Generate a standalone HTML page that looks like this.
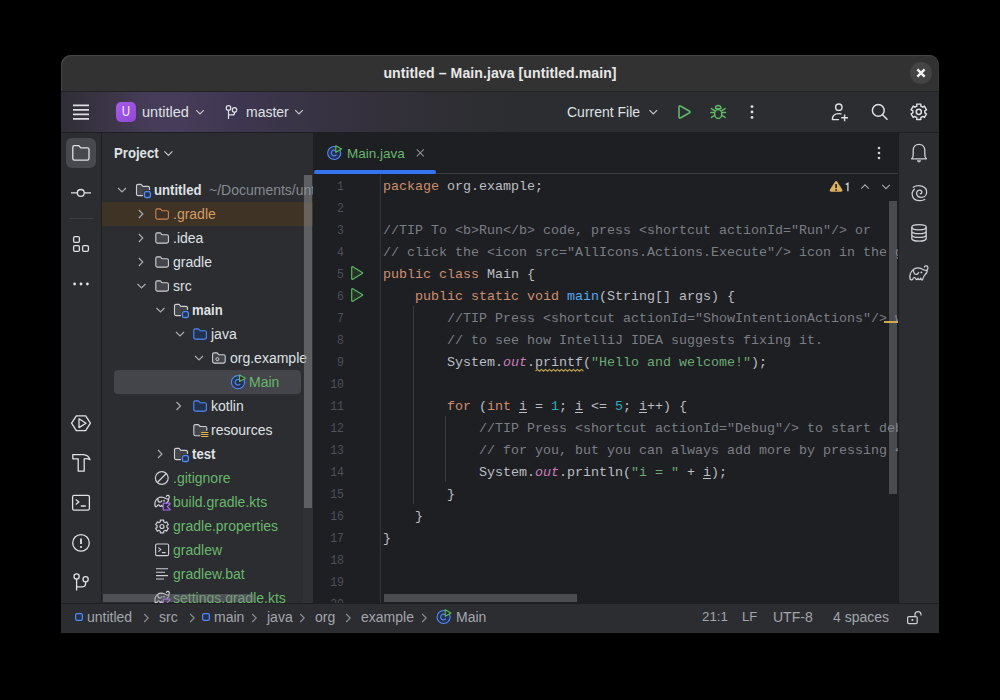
<!DOCTYPE html>
<html><head><meta charset="utf-8"><style>
*{box-sizing:border-box;margin:0;padding:0}
html,body{width:1000px;height:700px;background:#000;overflow:hidden;font-family:"Liberation Sans",sans-serif}
.a{position:absolute}
svg.i{position:absolute;left:0;top:0;overflow:visible}
.ui{color:#dfe1e5;font-size:14px;position:absolute;white-space:pre;line-height:16px}
.tr{position:absolute;font-size:14px;color:#dfe1e5;white-space:pre;line-height:16px}
.b{font-weight:bold;font-size:14.3px;transform:scaleX(0.92);transform-origin:0 0}
.g{color:#69b66d}
.code{font-family:"Liberation Mono",monospace;font-size:13.333px;white-space:pre;position:absolute;line-height:22px;color:#bcbec4}
.k{color:#cf8e6d}
.s{color:#6aab73}
.n{color:#2aacb8}
.c{color:#7a7e85}
.f{color:#56a8f5}
.st{color:#c77dbb;font-style:italic}
.u{text-decoration:underline;text-underline-offset:2px;text-decoration-thickness:1px}
.wv{text-decoration:underline wavy #b59a4e;text-decoration-thickness:1px;text-underline-offset:3px}
.ln{position:absolute;width:31px;text-align:right;transform:scaleX(0.86);transform-origin:100% 0;font-family:"Liberation Mono",monospace;font-size:13.333px;color:#4b5059;line-height:22px;white-space:pre}
.sb{position:absolute;font-size:14px;color:#a3a6ad;white-space:pre;line-height:16px;top:609px}
</style></head><body>
<div class="a" style="left:61px;top:55px;width:878px;height:578px;border-radius:10px 10px 0 0;overflow:hidden;background:#2b2d30"></div>
<div class="a" style="left:61px;top:55px;width:878px;height:37px;background:#323232;border-radius:10px 10px 0 0;box-shadow:inset 1px 1px 0 #454545,inset -1px 0 0 #3a3a3a;border-bottom:1px solid #232323"></div>
<div class="a" style="left:61px;top:65px;width:878px;text-align:center;color:#e8e8e8;font-weight:bold;font-size:14.1px;letter-spacing:0.06px;line-height:16px;white-space:pre">untitled – Main.java [untitled.main]</div>
<svg class="i" style="left:900px;top:55px" width="40" height="37" viewBox="900 55 40 37"><circle cx="921" cy="73" r="11" fill="#444444"/><path d="M917.4 69.4L924.6 76.6M924.6 69.4L917.4 76.6" stroke="#f4f4f4" stroke-width="2.4"/></svg>
<div class="a" style="left:61px;top:92px;width:878px;height:41px;background:linear-gradient(90deg,#2f2e36 0px,#383342 35px,#463c58 85px,#473c59 115px,#3e3650 180px,#383344 250px,#33303b 320px,#2e2e33 400px,#2b2d30 460px);border-bottom:1px solid #1e1f22"></div>
<svg class="i" style="left:65px;top:95px" width="30" height="30" viewBox="65 95 30 30"><path d="M73 105.3H89M73 109.8H89M73 114.3H89M73 118.8H89" stroke="#dcdde2" stroke-width="1.7"/></svg>
<div class="a" style="left:116px;top:102px;width:20px;height:20px;border-radius:5px;background:linear-gradient(135deg,#a65ce8,#9147d8)"></div>
<div class="ui" style="left:116px;top:103px;width:20px;text-align:center;color:#f3ecfb;font-size:14.5px;transform:scaleX(0.8)">U</div>
<div class="ui" style="left:142px;top:104px;font-size:14.5px">untitled</div>
<svg class="i" style="left:190px;top:100px" width="20" height="20" viewBox="190 100 20 20"><path d="M196.2 110.2L200 114L203.8 110.2" stroke="#c4c6cc" stroke-width="1.2" fill="none"/></svg>
<svg class="i" style="left:220px;top:100px" width="25" height="25" viewBox="220 100 25 25"><circle cx="228.5" cy="107.9" r="2.3" stroke="#dfe1e5" fill="none" stroke-width="1.2"/><circle cx="234.5" cy="109.9" r="2.2" stroke="#dfe1e5" fill="none" stroke-width="1.2"/><path d="M228.5 110.2V119M234.5 112.1V112.9Q234.5 114.9 232.5 114.9H228.5" stroke="#dfe1e5" fill="none" stroke-width="1.2"/></svg>
<div class="ui" style="left:246px;top:104px;">master</div>
<svg class="i" style="left:290px;top:100px" width="20" height="20" viewBox="290 100 20 20"><path d="M295.2 110.2L299 114L302.8 110.2" stroke="#c4c6cc" stroke-width="1.2" fill="none"/></svg>
<div class="ui" style="left:567px;top:104px;">Current File</div>
<svg class="i" style="left:645px;top:100px" width="20" height="20" viewBox="645 100 20 20"><path d="M649.5 110.2L653.3 114L657.1 110.2" stroke="#c4c6cc" stroke-width="1.2" fill="none"/></svg>
<svg class="i" style="left:670px;top:100px" width="30" height="24" viewBox="670 100 30 24"><path d="M679 107.2Q679 105.2 680.8 106.2L689.2 111Q690.8 112 689.2 113L680.8 117.8Q679 118.8 679 116.8Z" stroke="#5fb865" stroke-width="1.6" fill="none" stroke-linejoin="round"/></svg>
<svg class="i" style="left:700px;top:100px" width="30" height="24" viewBox="700 100 30 24"><path d="M715.4 108.6C715.4 106.6 716.6 105.5 718.2 105.5S721 106.6 721 108.6Z" stroke="#5fb865" stroke-width="1.4" fill="none" stroke-linejoin="round"/><ellipse cx="718.2" cy="114" rx="3.6" ry="4.4" stroke="#5fb865" stroke-width="1.5" fill="none"/><path d="M711.3 108.6L714.6 110.6M725.1 108.6L721.8 110.6M710.8 112.5H714.5M725.6 112.5H721.9M711.3 117.4L714.6 115.4M725.1 117.4L721.8 115.4" stroke="#5fb865" stroke-width="1.4" stroke-linecap="round"/></svg>
<svg class="i" style="left:745px;top:100px" width="14" height="24" viewBox="745 100 14 24"><circle cx="752" cy="106.6" r="1.4" fill="#dfe1e5"/><circle cx="752" cy="112" r="1.4" fill="#dfe1e5"/><circle cx="752" cy="117.4" r="1.4" fill="#dfe1e5"/></svg>
<svg class="i" style="left:825px;top:98px" width="30" height="28" viewBox="825 98 30 28"><circle cx="838.8" cy="107.2" r="3.2" stroke="#dfe1e5" fill="none" stroke-width="1.4"/><path d="M832.4 119.6C832.4 116 834.8 113.6 838.8 113.6C839.6 113.6 840.3 113.7 841 113.9M832.4 119.6H838.5" stroke="#dfe1e5" fill="none" stroke-width="1.4" stroke-linecap="round"/><path d="M844.6 114.4V121.2M841.2 117.8H848" stroke="#dfe1e5" fill="none" stroke-width="1.4"/></svg>
<svg class="i" style="left:865px;top:98px" width="30" height="28" viewBox="865 98 30 28"><circle cx="878.3" cy="110.4" r="5.9" stroke="#dfe1e5" fill="none" stroke-width="1.5"/><path d="M882.6 114.8L887 119.3" stroke="#dfe1e5" fill="none" stroke-width="1.5" stroke-linecap="round"/></svg>
<svg class="i" style="left:905px;top:98px" width="30" height="28" viewBox="905 98 30 28"><path d="M916.67 104.09L920.93 104.09L920.78 106.03L922.81 107.20L924.41 106.10L926.54 109.79L924.79 110.63L924.79 112.97L926.54 113.81L924.41 117.50L922.81 116.40L920.78 117.57L920.93 119.51L916.67 119.51L916.82 117.57L914.79 116.40L913.19 117.50L911.06 113.81L912.81 112.97L912.81 110.63L911.06 109.79L913.19 106.10L914.79 107.20L916.82 106.03Z" stroke="#dfe1e5" fill="none" stroke-width="1.4" stroke-linejoin="round"/><circle cx="918.8" cy="111.8" r="2.6" stroke="#dfe1e5" fill="none" stroke-width="1.5"/></svg>
<div class="a" style="left:61px;top:133px;width:41px;height:470px;background:#2b2d30;border-right:1px solid #1e1f22"></div>
<div class="a" style="left:102px;top:133px;width:211px;height:470px;background:#2b2d30;"></div>
<div class="a" style="left:313px;top:133px;width:585px;height:470px;background:#1e1f22;"></div>
<div class="a" style="left:898px;top:133px;width:41px;height:470px;background:#2b2d30;border-left:1px solid #1e1f22"></div>
<div class="a" style="left:66px;top:138px;width:30px;height:30px;background:#47494e;border-radius:6px"></div>
<svg class="i" style="left:66px;top:138px" width="30" height="30" viewBox="66 138 30 30"><path d="M72.8 147.3Q72.8 145.7 74.4 145.7H78.8L80.8 147.9H87.4Q89 147.9 89 149.5V158.6Q89 160.2 87.4 160.2H74.4Q72.8 160.2 72.8 158.6Z" stroke="#dfe1e5" fill="none" stroke-width="1.3" stroke-linejoin="round"/></svg>
<svg class="i" style="left:66px;top:185px" width="30" height="16" viewBox="66 185 30 16"><circle cx="80.8" cy="192.9" r="3.4" stroke="#dfe1e5" fill="none" stroke-width="1.3"/><path d="M71 192.9H77.4M84.2 192.9H91" stroke="#dfe1e5" fill="none" stroke-width="1.3"/></svg>
<div class="a" style="left:69px;top:218px;width:24px;height:1px;background:#3c3f44;"></div>
<svg class="i" style="left:66px;top:230px" width="30" height="30" viewBox="66 230 30 30"><rect x="73.6" y="236.6" width="5.8" height="5.8" rx="1.4" stroke="#dfe1e5" fill="none" stroke-width="1.3" stroke-width="1.2"/><rect x="73.6" y="245.6" width="5.8" height="5.8" rx="1.4" stroke="#dfe1e5" fill="none" stroke-width="1.3" stroke-width="1.2"/><rect x="82.6" y="245.6" width="5.8" height="5.8" rx="1.4" stroke="#dfe1e5" fill="none" stroke-width="1.3" stroke-width="1.2"/></svg>
<svg class="i" style="left:66px;top:278px" width="30" height="12" viewBox="66 278 30 12"><circle cx="74.6" cy="284" r="1.4" fill="#dfe1e5"/><circle cx="81" cy="284" r="1.4" fill="#dfe1e5"/><circle cx="87.4" cy="284" r="1.4" fill="#dfe1e5"/></svg>
<svg class="i" style="left:66px;top:410px" width="30" height="26" viewBox="66 410 30 26"><path d="M76.3 415.8H85.7L90.4 423.2L85.7 430.6H76.3L71.6 423.2Z" stroke="#dfe1e5" fill="none" stroke-width="1.3" stroke-linejoin="round"/><path d="M79 418.8V427.6L86 423.2Z" stroke="#dfe1e5" fill="none" stroke-width="1.3" stroke-linejoin="round"/></svg>
<svg class="i" style="left:66px;top:450px" width="30" height="26" viewBox="66 450 30 26"><path d="M72.8 454.6H83.4Q88.4 455 90 459.6Q87.2 458.2 84.2 458.8V471.2H78.2V458.8H72.8Z" stroke="#dfe1e5" fill="none" stroke-width="1.3" stroke-linejoin="round"/></svg>
<svg class="i" style="left:66px;top:490px" width="30" height="26" viewBox="66 490 30 26"><rect x="72.6" y="495.4" width="16.8" height="14.8" rx="1.6" stroke="#dfe1e5" fill="none" stroke-width="1.3"/><path d="M75.8 499.6L78.8 502.1L75.8 504.6M80.8 506H85.8" stroke="#dfe1e5" fill="none" stroke-width="1.3"/></svg>
<svg class="i" style="left:66px;top:530px" width="30" height="26" viewBox="66 530 30 26"><circle cx="81" cy="542.9" r="8.3" stroke="#dfe1e5" fill="none" stroke-width="1.3" stroke-width="1.4"/><path d="M81 538.4V544" stroke="#dfe1e5" stroke-width="1.8"/><circle cx="81" cy="547" r="1.1" fill="#dfe1e5"/></svg>
<svg class="i" style="left:66px;top:570px" width="30" height="26" viewBox="66 570 30 26"><circle cx="76.6" cy="576.4" r="2.6" stroke="#dfe1e5" fill="none" stroke-width="1.3"/><circle cx="85.6" cy="579.2" r="2.6" stroke="#dfe1e5" fill="none" stroke-width="1.3"/><path d="M76.6 579V590.6M85.6 581.8V583.6Q85.6 586.8 82.4 586.8H76.6" stroke="#dfe1e5" fill="none" stroke-width="1.3"/></svg>
<div class="tr b" style="left:114px;top:145px;">Project</div>
<svg class="i" style="left:160px;top:145px" width="20" height="16" viewBox="160 145 20 16"><path d="M164.4 151.4L168.4 155.4L172.4 151.4" stroke="#c4c6cc" stroke-width="1.2" fill="none"/></svg>
<div class="a" style="left:102px;top:202px;width:211px;height:24px;background:#3f3325;"></div>
<div class="a" style="left:114px;top:370px;width:187px;height:24px;background:#43454a;border-radius:4px"></div>
<div class="a" style="left:102px;top:133px;width:211px;height:470px;overflow:hidden"><div class="a" style="left:-102px;top:-133px;width:1000px;height:700px">
<div class="tr b" style="left:154px;top:182px;">untitled</div>
<div class="tr" style="left:209px;top:182px;color:#868a91">~/Documents/untitled</div>
<div class="tr" style="left:173px;top:206px;color:#d59c62">.gradle</div>
<div class="tr" style="left:173px;top:230px;">.idea</div>
<div class="tr" style="left:173px;top:254px;">gradle</div>
<div class="tr" style="left:173px;top:278px;">src</div>
<div class="tr b" style="left:192px;top:302px;">main</div>
<div class="tr" style="left:211px;top:326px;">java</div>
<div class="tr" style="left:230px;top:350px;">org.example</div>
<div class="tr g" style="left:249px;top:374px;">Main</div>
<div class="tr" style="left:211px;top:398px;">kotlin</div>
<div class="tr" style="left:211px;top:422px;">resources</div>
<div class="tr b" style="left:192px;top:446px;">test</div>
<div class="tr g" style="left:173px;top:470px;">.gitignore</div>
<div class="tr g" style="left:173px;top:494px;">build.gradle.kts</div>
<div class="tr g" style="left:173px;top:518px;">gradle.properties</div>
<div class="tr g" style="left:173px;top:542px;">gradlew</div>
<div class="tr g" style="left:173px;top:566px;">gradlew.bat</div>
<div class="tr g" style="left:173px;top:590px;">settings.gradle.kts</div>
<svg class="i" style="left:102px;top:133px" width="211" height="470" viewBox="102 133 211 470"><path d="M118 188L122 192L126 188" stroke="#a8aab0" stroke-width="1.2" fill="none"/><path d="M136.5 185.9Q136.5 184.4 138.0 184.4H141.1L142.9 186.3H148.0Q149.5 186.3 149.5 187.8V190.4H143.5V195.6H138.0Q136.5 195.6 136.5 194.1Z" fill="#43454a"/><path d="M142.9 195.6H138.0Q136.5 195.6 136.5 194.1V185.9Q136.5 184.4 138.0 184.4H141.1L142.9 186.3H148.0Q149.5 186.3 149.5 187.8V190.0" stroke="#ced0d6" stroke-width="1.15" fill="none" stroke-linejoin="round"/><rect x="144.5" y="191.6" width="5.9" height="5.9" rx="1.6" stroke="#548af7" stroke-width="1.3" fill="#233250"/><path d="M138.8 210L142.8 214L138.8 218" stroke="#a8aab0" stroke-width="1.2" fill="none"/><path d="M155.8 210.4Q155.8 208.9 157.3 208.9H160.4L162.20000000000002 210.8H166.9Q168.4 210.8 168.4 212.3V217.6Q168.4 219.1 166.9 219.1H157.3Q155.8 219.1 155.8 217.6Z" stroke="#c98451" stroke-width="1.1" fill="#3f3026" stroke-linejoin="round"/><path d="M138.8 234L142.8 238L138.8 242" stroke="#a8aab0" stroke-width="1.2" fill="none"/><path d="M155.8 234.4Q155.8 232.9 157.3 232.9H160.4L162.20000000000002 234.8H166.9Q168.4 234.8 168.4 236.3V241.6Q168.4 243.1 166.9 243.1H157.3Q155.8 243.1 155.8 241.6Z" stroke="#ced0d6" stroke-width="1.1" fill="#43454a" stroke-linejoin="round"/><path d="M138.8 258L142.8 262L138.8 266" stroke="#a8aab0" stroke-width="1.2" fill="none"/><path d="M155.8 258.4Q155.8 256.9 157.3 256.9H160.4L162.20000000000002 258.79999999999995H166.9Q168.4 258.79999999999995 168.4 260.29999999999995V265.59999999999997Q168.4 267.09999999999997 166.9 267.09999999999997H157.3Q155.8 267.09999999999997 155.8 265.59999999999997Z" stroke="#ced0d6" stroke-width="1.1" fill="#43454a" stroke-linejoin="round"/><path d="M137.5 284L141.5 288L145.5 284" stroke="#a8aab0" stroke-width="1.2" fill="none"/><path d="M155.8 282.4Q155.8 280.9 157.3 280.9H160.4L162.20000000000002 282.79999999999995H166.9Q168.4 282.79999999999995 168.4 284.29999999999995V289.59999999999997Q168.4 291.09999999999997 166.9 291.09999999999997H157.3Q155.8 291.09999999999997 155.8 289.59999999999997Z" stroke="#ced0d6" stroke-width="1.1" fill="#43454a" stroke-linejoin="round"/><path d="M156.5 308L160.5 312L164.5 308" stroke="#a8aab0" stroke-width="1.2" fill="none"/><path d="M174.5 305.9Q174.5 304.4 176.0 304.4H179.1L180.9 306.29999999999995H186.0Q187.5 306.29999999999995 187.5 307.79999999999995V310.4H181.5V315.59999999999997H176.0Q174.5 315.59999999999997 174.5 314.09999999999997Z" fill="#43454a"/><path d="M180.9 315.59999999999997H176.0Q174.5 315.59999999999997 174.5 314.09999999999997V305.9Q174.5 304.4 176.0 304.4H179.1L180.9 306.29999999999995H186.0Q187.5 306.29999999999995 187.5 307.79999999999995V310.0" stroke="#ced0d6" stroke-width="1.15" fill="none" stroke-linejoin="round"/><rect x="182.5" y="311.59999999999997" width="5.9" height="5.9" rx="1.6" stroke="#548af7" stroke-width="1.3" fill="#233250"/><path d="M176 332L180 336L184 332" stroke="#a8aab0" stroke-width="1.2" fill="none"/><path d="M193.8 330.4Q193.8 328.9 195.3 328.9H198.4L200.20000000000002 330.79999999999995H204.9Q206.4 330.79999999999995 206.4 332.29999999999995V337.59999999999997Q206.4 339.09999999999997 204.9 339.09999999999997H195.3Q193.8 339.09999999999997 193.8 337.59999999999997Z" stroke="#548af7" stroke-width="1.1" fill="#233250" stroke-linejoin="round"/><path d="M195 356L199 360L203 356" stroke="#a8aab0" stroke-width="1.2" fill="none"/><path d="M212.6 354.4Q212.6 352.9 214.1 352.9H217.2L219.0 354.79999999999995H223.7Q225.2 354.79999999999995 225.2 356.29999999999995V361.59999999999997Q225.2 363.09999999999997 223.7 363.09999999999997H214.1Q212.6 363.09999999999997 212.6 361.59999999999997Z" stroke="#ced0d6" stroke-width="1.1" fill="#43454a" stroke-linejoin="round"/><circle cx="217.4" cy="359.2" r="1.5" stroke="#ced0d6" stroke-width="1" fill="none"/><circle cx="238" cy="382.2" r="6.55" stroke="#548af7" stroke-width="1.1" fill="#233250"/><path d="M240.2 380.59999999999997A2.8 2.8 0 1 0 240.2 383.8" stroke="#548af7" stroke-width="1.15" fill="none"/><path d="M239.6 375.0V381.4L245.4 378.2Z" fill="#22301f" stroke="#5fb865" stroke-width="1.1" stroke-linejoin="round"/><path d="M176.5 402L180.5 406L176.5 410" stroke="#a8aab0" stroke-width="1.2" fill="none"/><path d="M193.8 402.4Q193.8 400.9 195.3 400.9H198.4L200.20000000000002 402.79999999999995H204.9Q206.4 402.79999999999995 206.4 404.29999999999995V409.59999999999997Q206.4 411.09999999999997 204.9 411.09999999999997H195.3Q193.8 411.09999999999997 193.8 409.59999999999997Z" stroke="#548af7" stroke-width="1.1" fill="#233250" stroke-linejoin="round"/><path d="M200.3 435.8H195.3Q193.8 435.8 193.8 434.3V426.1Q193.8 424.6 195.3 424.6H198.4L200.20000000000002 426.5H205.3Q206.8 426.5 206.8 428.0V430.8" stroke="#ced0d6" stroke-width="1.1" fill="#43454a" stroke-linejoin="round"/><path d="M201.2 432.5H208.4M201.2 434.5H208.4M201.2 436.5H208.4" stroke="#e3b44c" stroke-width="1.15"/><path d="M158 450L162 454L158 458" stroke="#a8aab0" stroke-width="1.2" fill="none"/><path d="M174.5 449.9Q174.5 448.4 176.0 448.4H179.1L180.9 450.29999999999995H186.0Q187.5 450.29999999999995 187.5 451.79999999999995V454.4H181.5V459.59999999999997H176.0Q174.5 459.59999999999997 174.5 458.09999999999997Z" fill="#43454a"/><path d="M180.9 459.59999999999997H176.0Q174.5 459.59999999999997 174.5 458.09999999999997V449.9Q174.5 448.4 176.0 448.4H179.1L180.9 450.29999999999995H186.0Q187.5 450.29999999999995 187.5 451.79999999999995V454.0" stroke="#ced0d6" stroke-width="1.15" fill="none" stroke-linejoin="round"/><rect x="182.5" y="455.59999999999997" width="5.9" height="5.9" rx="1.6" stroke="#548af7" stroke-width="1.3" fill="#233250"/><circle cx="161.8" cy="478" r="6.4" stroke="#ced0d6" stroke-width="1.2" fill="none"/><path d="M157.3 482.5L166.3 473.5" stroke="#ced0d6" stroke-width="1.2"/><g transform="translate(-573.02,282.72) scale(0.8)"><path d="M910.2 279.4C909.4 276 910.4 272 913.2 269.6C916 267.6 920.4 267.8 923.6 269.8C924.8 270.4 926 270.6 927 270C928.4 268.8 928.2 266.4 926.6 265.9C925.4 265.6 924.6 266.2 924.4 267M927 270C927.6 271.8 926.4 273.6 924.8 275C923.6 276 923.2 277.6 922.6 279.6Q921.7 280.8 920.7 278.2Q919.5 281.2 918.1 278.2Q916.9 281.2 915.5 278.2Q914.4 277 913.3 278.2Q912 281 910.2 279.4M913.4 270.2C913.6 272.6 914.6 274.4 916.4 274.4C917.4 274.4 918.2 273.6 918.6 272.6" stroke="#ced0d6" stroke-width="1.56" fill="none" stroke-linejoin="round" stroke-linecap="round"/><circle cx="921.4" cy="272.4" r="1.12" fill="#ced0d6"/></g><path d="M163.2 503.2H170V504L167.2 506.6L170 509.2V510H163.2Z" stroke="#a571e6" stroke-width="1.2" fill="#2e2640" stroke-linejoin="round"/><path d="M160.24 520.14L163.76 520.14L163.62 521.77L165.29 522.73L166.63 521.79L168.39 524.84L166.91 525.54L166.91 527.46L168.39 528.16L166.63 531.21L165.29 530.27L163.62 531.23L163.76 532.86L160.24 532.86L160.38 531.23L158.71 530.27L157.37 531.21L155.61 528.16L157.09 527.46L157.09 525.54L155.61 524.84L157.37 521.79L158.71 522.73L160.38 521.77Z" stroke="#ced0d6" stroke-width="1.15" fill="none" stroke-linejoin="round"/><circle cx="162" cy="526.5" r="2" stroke="#ced0d6" stroke-width="1.2" fill="none"/><rect x="155.6" y="544" width="13" height="11.6" rx="1.3" stroke="#ced0d6" stroke-width="1.1" fill="none"/><path d="M158.4 547.6L160.8 549.6L158.4 551.6M162 552.6H165.6" stroke="#ced0d6" stroke-width="1.1" fill="none"/><path d="M156 568.8H168M156 572.2H165M156 575.6H168M156 579H164" stroke="#ced0d6" stroke-width="1.1"/><g transform="translate(-573.02,378.72) scale(0.8)"><path d="M910.2 279.4C909.4 276 910.4 272 913.2 269.6C916 267.6 920.4 267.8 923.6 269.8C924.8 270.4 926 270.6 927 270C928.4 268.8 928.2 266.4 926.6 265.9C925.4 265.6 924.6 266.2 924.4 267M927 270C927.6 271.8 926.4 273.6 924.8 275C923.6 276 923.2 277.6 922.6 279.6Q921.7 280.8 920.7 278.2Q919.5 281.2 918.1 278.2Q916.9 281.2 915.5 278.2Q914.4 277 913.3 278.2Q912 281 910.2 279.4M913.4 270.2C913.6 272.6 914.6 274.4 916.4 274.4C917.4 274.4 918.2 273.6 918.6 272.6" stroke="#ced0d6" stroke-width="1.56" fill="none" stroke-linejoin="round" stroke-linecap="round"/><circle cx="921.4" cy="272.4" r="1.12" fill="#ced0d6"/></g><path d="M163.2 599.2H170V600L167.2 602.6L170 605.2V606H163.2Z" stroke="#a571e6" stroke-width="1.2" fill="#2e2640" stroke-linejoin="round"/></svg>
<div class="a" style="left:103px;top:594px;width:151px;height:8px;background:rgba(125,127,132,0.45);"></div>
<div class="a" style="left:303px;top:175px;width:10px;height:428px;background:rgba(255,255,255,0.02);"></div>
<div class="a" style="left:304px;top:175px;width:8px;height:333px;background:rgba(140,141,145,0.5);"></div>
</div></div>
<div class="a" style="left:313px;top:133px;width:585px;height:470px;overflow:hidden"><div class="a" style="left:-313px;top:-133px;width:1000px;height:700px">
<div class="tr g" style="left:347px;top:146px;font-size:13.5px">Main.java</div>
<div class="a" style="left:313px;top:173px;width:585px;height:1px;background:#393b40;"></div>
<div class="a" style="left:314px;top:170px;width:122px;height:4px;background:#3574f0;border-radius:2px"></div>
<div class="a" style="left:380px;top:174px;width:1px;height:429px;background:#313438;"></div>
<div class="ln" style="left:313px;top:176px">1
2
3
4
5
6
7
8
9
10
11
12
13
14
15
16
17
18
19
20</div>
<div class="a" style="left:413px;top:306px;width:1px;height:198px;background:#393b40;"></div>
<div class="a" style="left:445px;top:416px;width:1px;height:66px;background:#393b40;"></div>
<div class="code" style="left:383px;top:176px"><span class="k">package</span> org.example;

<span class="c">//TIP To &lt;b&gt;Run&lt;/b&gt; code, press &lt;shortcut actionId="Run"/&gt; or</span>
<span class="c">// click the &lt;icon src="AllIcons.Actions.Execute"/&gt; icon in the gutter.</span>
<span class="k">public class</span> Main {
    <span class="k">public static void</span> <span class="f">main</span>(String[] args) {
        <span class="c">//TIP Press &lt;shortcut actionId="ShowIntentionActions"/&gt; with your caret at the highlighted text</span>
        <span class="c">// to see how IntelliJ IDEA suggests fixing it.</span>
        System.<span class="st">out</span>.printf(<span class="s">"Hello and welcome!"</span>);

        <span class="k">for</span> (<span class="k">int</span> <span class="u">i</span> = <span class="n">1</span>; <span class="u">i</span> &lt;= <span class="n">5</span>; <span class="u">i</span>++) {
            <span class="c">//TIP Press &lt;shortcut actionId="Debug"/&gt; to start debugging your code.</span>
            <span class="c">// for you, but you can always add more by pressing &lt;shortcut actionId="ToggleLineBreakpoint"/&gt;.</span>
            System.<span class="st">out</span>.println(<span class="s">"i = "</span> + <span class="u">i</span>);
        }
    }
}


</div>
<svg class="i" style="left:313px;top:133px" width="585" height="470" viewBox="313 133 585 470"><circle cx="334.2" cy="153" r="6.55" stroke="#548af7" stroke-width="1.1" fill="#233250"/><path d="M336.4 151.4A2.8 2.8 0 1 0 336.4 154.6" stroke="#548af7" stroke-width="1.15" fill="none"/><path d="M335.8 145.8V152.2L341.59999999999997 149Z" fill="#22301f" stroke="#5fb865" stroke-width="1.1" stroke-linejoin="round"/><path d="M416.8 149.4L423.8 156.4M423.8 149.4L416.8 156.4" stroke="#8c8f95" stroke-width="1.1"/><circle cx="879" cy="148" r="1.3" fill="#ced0d6"/><circle cx="879" cy="153" r="1.3" fill="#ced0d6"/><circle cx="879" cy="158" r="1.3" fill="#ced0d6"/><path d="M351.7 267.4Q351.7 266.2 352.8 266.8L362.2 272.4Q363.2 273 362.2 273.6L352.8 279.2Q351.7 279.8 351.7 278.6Z" stroke="#5fb865" stroke-width="1.15" fill="#233426" stroke-linejoin="round"/><path d="M351.7 289.4Q351.7 288.2 352.8 288.8L362.2 294.4Q363.2 295 362.2 295.6L352.8 301.2Q351.7 301.8 351.7 300.6Z" stroke="#5fb865" stroke-width="1.15" fill="#233426" stroke-linejoin="round"/><path d="M834.6 182.2Q836.1 180 837.6 182.2L842.2 189.6Q843.2 191.8 840.8 191.8H831.4Q829 191.8 830 189.6Z" fill="#d9b15f"/><path d="M836.1 184V188" stroke="#1e1f22" stroke-width="1.6"/><circle cx="836.1" cy="190" r="0.9" fill="#1e1f22"/><path d="M845.8 184.6L847.9 183.2V191.2" stroke="#c6c9d0" stroke-width="1.4" fill="none"/><path d="M861.2 188.6L865 184.8L868.8 188.6M882.2 184.8L886 188.6L889.8 184.8" stroke="#a2a5ab" stroke-width="1.2" fill="none"/><path d="M535.5 371.2L537.5 369.4L539.5 371.2L541.5 369.4L543.5 371.2L545.5 369.4L547.5 371.2L549.5 369.4L551.5 371.2L553.5 369.4L555.5 371.2L557.5 369.4L559.5 371.2L561.5 369.4L563.5 371.2L565.5 369.4L567.5 371.2L569.5 369.4L571.5 371.2L573.5 369.4L575.5 371.2L577.5 369.4L579.5 371.2L581.5 369.4L583.5 371.2" stroke="#c5a451" stroke-width="1.1" fill="none"/></svg>
<div class="a" style="left:889px;top:201px;width:8px;height:293px;background:rgba(150,152,156,0.37);"></div>
<div class="a" style="left:884px;top:321px;width:14px;height:2px;background:#d2a94f;"></div>
<div class="a" style="left:384px;top:594px;width:193px;height:8px;background:#4b4c50;"></div>
</div></div>
<svg class="i" style="left:898px;top:133px" width="41" height="200" viewBox="898 133 41 200"><path d="M911.6 158.8Q913.2 157.4 913.2 155V150.6C913.2 146.8 915.8 144.4 919 144.4S924.8 146.8 924.8 150.6V155Q924.8 157.4 926.4 158.8Z" stroke="#ced0d6" fill="none" stroke-width="1.3" stroke-linejoin="round"/><path d="M917.2 160.8H920.8L919 162.2Z" fill="#ced0d6" stroke="#ced0d6" stroke-width="0.8" stroke-linejoin="round"/><path d="M913.2 187.2C915.6 185.8 919 185.4 921.8 186.2C925 187.2 927 190 926.6 193C926.2 195.8 923.6 197.6 920.8 197.4C918.2 197.2 916.4 195.2 916.6 193C916.8 191.2 918.2 190 919.8 190.2C921.2 190.4 922 191.4 921.8 192.6C921.6 193.4 920.8 193.8 920.2 193.7M914.4 189.2C912.4 191 911.6 193.8 912.6 196.4C913.8 199.4 917 200.8 920.4 200.6C922 200.5 923.6 200.1 924.8 199.5" stroke="#ced0d6" fill="none" stroke-width="1.3" stroke-linecap="round"/><ellipse cx="919" cy="227.2" rx="7.2" ry="2.6" stroke="#ced0d6" fill="none" stroke-width="1.3"/><path d="M911.8 227.2V238.4C911.8 239.9 915 241.2 919 241.2S926.2 239.9 926.2 238.4V227.2M911.8 231C911.8 232.5 915 233.7 919 233.7S926.2 232.5 926.2 231M911.8 234.7C911.8 236.2 915 237.4 919 237.4S926.2 236.2 926.2 234.7" stroke="#ced0d6" fill="none" stroke-width="1.3"/><g transform="translate(0.00,0.00) scale(1.0)"><path d="M910.2 279.4C909.4 276 910.4 272 913.2 269.6C916 267.6 920.4 267.8 923.6 269.8C924.8 270.4 926 270.6 927 270C928.4 268.8 928.2 266.4 926.6 265.9C925.4 265.6 924.6 266.2 924.4 267M927 270C927.6 271.8 926.4 273.6 924.8 275C923.6 276 923.2 277.6 922.6 279.6Q921.7 280.8 920.7 278.2Q919.5 281.2 918.1 278.2Q916.9 281.2 915.5 278.2Q914.4 277 913.3 278.2Q912 281 910.2 279.4M913.4 270.2C913.6 272.6 914.6 274.4 916.4 274.4C917.4 274.4 918.2 273.6 918.6 272.6" stroke="#ced0d6" stroke-width="1.25" fill="none" stroke-linejoin="round" stroke-linecap="round"/><circle cx="921.4" cy="272.4" r="0.90" fill="#ced0d6"/></g></svg>
<div class="a" style="left:61px;top:603px;width:878px;height:30px;background:#2b2d30;border-top:1px solid #1e1f22"></div>
<div class="sb" style="left:87px;top:609px;">untitled</div>
<div class="sb" style="left:159px;top:609px;">src</div>
<div class="sb" style="left:214px;top:609px;">main</div>
<div class="sb" style="left:267px;top:609px;">java</div>
<div class="sb" style="left:315px;top:609px;">org</div>
<div class="sb" style="left:361px;top:609px;">example</div>
<div class="sb" style="left:456px;top:609px;">Main</div>
<div class="sb" style="left:702px;top:609px;font-size:13.3px">21:1</div>
<div class="sb" style="left:742px;top:609px;font-size:13px">LF</div>
<div class="sb" style="left:773px;top:609px;">UTF-8</div>
<div class="sb" style="left:833px;top:609px;">4 spaces</div>
<svg class="i" style="left:61px;top:603px" width="878" height="30" viewBox="61 603 878 30"><rect x="75.6" y="613.6" width="6.8" height="6.8" rx="1.6" stroke="#548af7" stroke-width="1.2" fill="#233250"/><path d="M144.2 614L148.2 618L144.2 622" stroke="#8c8f95" stroke-width="1.1" fill="none"/><path d="M190.2 614L194.2 618L190.2 622" stroke="#8c8f95" stroke-width="1.1" fill="none"/><rect x="202.6" y="613.6" width="6.8" height="6.8" rx="1.6" stroke="#548af7" stroke-width="1.2" fill="#233250"/><path d="M252.2 614L256.2 618L252.2 622" stroke="#8c8f95" stroke-width="1.1" fill="none"/><path d="M300.2 614L304.2 618L300.2 622" stroke="#8c8f95" stroke-width="1.1" fill="none"/><path d="M346.2 614L350.2 618L346.2 622" stroke="#8c8f95" stroke-width="1.1" fill="none"/><path d="M422.2 614L426.2 618L422.2 622" stroke="#8c8f95" stroke-width="1.1" fill="none"/><circle cx="443.6" cy="617" r="6.55" stroke="#548af7" stroke-width="1.1" fill="#233250"/><path d="M445.8 615.4A2.8 2.8 0 1 0 445.8 618.6" stroke="#548af7" stroke-width="1.15" fill="none"/><path d="M445.20000000000005 609.8V616.2L451.0 613Z" fill="#22301f" stroke="#5fb865" stroke-width="1.1" stroke-linejoin="round"/><rect x="907.6" y="616.6" width="9.6" height="7" rx="1.3" stroke="#ced0d6" stroke-width="1.2" fill="none"/><path d="M915 616.6V614.6C915 612.9 916.3 611.7 918 611.7S921 612.9 921 614.6V615.6" stroke="#ced0d6" stroke-width="1.2" fill="none"/><circle cx="912.4" cy="620.1" r="1" fill="#ced0d6"/></svg>
</body></html>
